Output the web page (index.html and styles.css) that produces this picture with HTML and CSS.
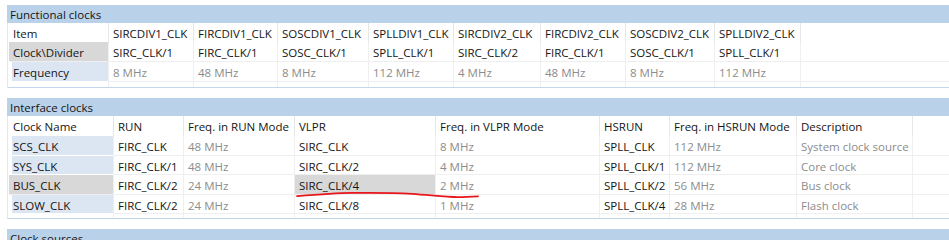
FILE: index.html
```html
<!DOCTYPE html>
<html>
<head>
<meta charset="utf-8">
<link rel="stylesheet" href="styles.css">
</head>
<body>
<div class="page">
  <section class="panel">
    <div class="panel-title">Functional clocks</div>
    <div class="grid grid-func">
      <div class="cell head first">Item</div>
      <div class="cell head">SIRCDIV1_CLK</div>
      <div class="cell head">FIRCDIV1_CLK</div>
      <div class="cell head">SOSCDIV1_CLK</div>
      <div class="cell head">SPLLDIV1_CLK</div>
      <div class="cell head">SIRCDIV2_CLK</div>
      <div class="cell head">FIRCDIV2_CLK</div>
      <div class="cell head">SOSCDIV2_CLK</div>
      <div class="cell head">SPLLDIV2_CLK</div>
      <div class="cell head filler"></div>

      <div class="cell first sel-gray">Clock\Divider</div>
      <div class="cell">SIRC_CLK/1</div>
      <div class="cell">FIRC_CLK/1</div>
      <div class="cell">SOSC_CLK/1</div>
      <div class="cell">SPLL_CLK/1</div>
      <div class="cell">SIRC_CLK/2</div>
      <div class="cell">FIRC_CLK/1</div>
      <div class="cell">SOSC_CLK/1</div>
      <div class="cell">SPLL_CLK/1</div>
      <div class="cell filler"></div>

      <div class="cell first sel-blue">Frequency</div>
      <div class="cell muted">8 MHz</div>
      <div class="cell muted">48 MHz</div>
      <div class="cell muted">8 MHz</div>
      <div class="cell muted">112 MHz</div>
      <div class="cell muted">4 MHz</div>
      <div class="cell muted">48 MHz</div>
      <div class="cell muted">8 MHz</div>
      <div class="cell muted">112 MHz</div>
      <div class="cell filler"></div>

      <div class="cell tail"></div>
      <div class="cell tail"></div>
      <div class="cell tail"></div>
      <div class="cell tail"></div>
      <div class="cell tail"></div>
      <div class="cell tail"></div>
      <div class="cell tail"></div>
      <div class="cell tail"></div>
      <div class="cell tail"></div>
      <div class="cell tail filler"></div>
    </div>
  </section>

  <section class="panel">
    <div class="panel-title">Interface clocks</div>
    <div class="grid grid-iface">
      <div class="cell head first">Clock Name</div>
      <div class="cell head">RUN</div>
      <div class="cell head">Freq. in RUN Mode</div>
      <div class="cell head">VLPR</div>
      <div class="cell head">Freq. in VLPR Mode</div>
      <div class="cell head">HSRUN</div>
      <div class="cell head">Freq. in HSRUN Mode</div>
      <div class="cell head">Description</div>
      <div class="cell head filler"></div>

      <div class="cell first sel-blue">SCS_CLK</div>
      <div class="cell">FIRC_CLK</div>
      <div class="cell muted">48 MHz</div>
      <div class="cell">SIRC_CLK</div>
      <div class="cell muted">8 MHz</div>
      <div class="cell">SPLL_CLK</div>
      <div class="cell muted">112 MHz</div>
      <div class="cell muted">System clock source</div>
      <div class="cell filler"></div>

      <div class="cell first sel-blue">SYS_CLK</div>
      <div class="cell">FIRC_CLK/1</div>
      <div class="cell muted">48 MHz</div>
      <div class="cell">SIRC_CLK/2</div>
      <div class="cell muted">4 MHz</div>
      <div class="cell">SPLL_CLK/1</div>
      <div class="cell muted">112 MHz</div>
      <div class="cell muted">Core clock</div>
      <div class="cell filler"></div>

      <div class="cell first sel-gray">BUS_CLK</div>
      <div class="cell">FIRC_CLK/2</div>
      <div class="cell muted">24 MHz</div>
      <div class="cell sel-full">SIRC_CLK/4</div>
      <div class="cell muted">2 MHz</div>
      <div class="cell">SPLL_CLK/2</div>
      <div class="cell muted">56 MHz</div>
      <div class="cell muted">Bus clock</div>
      <div class="cell filler"></div>

      <div class="cell first sel-blue">SLOW_CLK</div>
      <div class="cell">FIRC_CLK/2</div>
      <div class="cell muted">24 MHz</div>
      <div class="cell">SIRC_CLK/8</div>
      <div class="cell muted">1 MHz</div>
      <div class="cell">SPLL_CLK/4</div>
      <div class="cell muted">28 MHz</div>
      <div class="cell muted">Flash clock</div>
      <div class="cell filler"></div>

      <div class="cell tail"></div>
      <div class="cell tail"></div>
      <div class="cell tail"></div>
      <div class="cell tail"></div>
      <div class="cell tail"></div>
      <div class="cell tail"></div>
      <div class="cell tail"></div>
      <div class="cell tail"></div>
      <div class="cell tail filler"></div>
    </div>
  </section>

  <section class="panel">
    <div class="panel-title">Clock sources</div>
  </section>

  <svg class="annotation" width="949" height="240" viewBox="0 0 949 240" aria-hidden="true">
    <path d="M297 196.2 C 318 194.5, 335 193.2, 352 192.9 C 375 192.6, 395 192.8, 412 193.8 C 430 195, 445 197.2, 458 197.2 C 466 197.2, 472 196.8, 478 196.4" fill="none" stroke="#e8161b" stroke-width="1.8" stroke-linecap="round"/>
  </svg>
</div>
</body>
</html>
```

FILE: styles.css
```css
* { box-sizing: border-box; }

html, body {
  margin: 0;
  padding: 0;
  background: #ffffff;
}

body {
  font-family: "Open Sans", "Noto Sans", "Liberation Sans", sans-serif;
  font-size: 11.5px;
  color: #151515;
  overflow: hidden;
}

.page {
  position: relative;
  width: 949px;
  height: 240px;
  padding: 5px 0 0 7px;
}

.panel + .panel {
  margin-top: 10px;
}

.panel-title {
  height: 18px;
  padding: 1px 0 0 3px;
  line-height: 17px;
  background: #bad1ea;
  color: #151515;
  white-space: nowrap;
}

.grid {
  display: grid;
  grid-auto-rows: 20px;
  border-left: 1px solid #dfe8f3;
  border-bottom: 1px solid #c3d6ec;
}

.grid-func {
  grid-template-columns: 101px 85px 84px 91px 85px 87px 85px 89px 86px 1fr;
  grid-template-rows: 19px 20px 20px 5px;
}

.grid-iface {
  grid-template-columns: 106px 70px 111px 141px 164px 70px 127px 116px 1fr;
  grid-template-rows: 20px 19.5px 19.5px 19.5px 19.5px 4px;
}

.cell {
  padding: 2px 0 0 4px;
  line-height: 17px;
  white-space: nowrap;
  overflow: hidden;
  border-right: 1px solid #efefef;
  border-bottom: 1px solid #efefef;
}

.cell.head {
  border-bottom: none;
  border-right-color: #e6e6e6;
}

.cell.first {
  padding-left: 5px;
}

.cell.filler {
  border-right: none;
}

.cell.tail {
  border-bottom: none;
}

.cell.muted {
  color: #8c8c8c;
}

.cell.sel-blue {
  margin-left: 4px;
  padding-left: 1px;
  background: #dce6f3;
  border-bottom-color: #ffffff;
}

.cell.sel-gray {
  margin-left: 1px;
  padding-left: 4px;
  background: #d8d8d8;
}

.cell.sel-full {
  background: #d8d8d8;
}

.annotation {
  position: absolute;
  left: 0;
  top: 0;
  pointer-events: none;
}
```
